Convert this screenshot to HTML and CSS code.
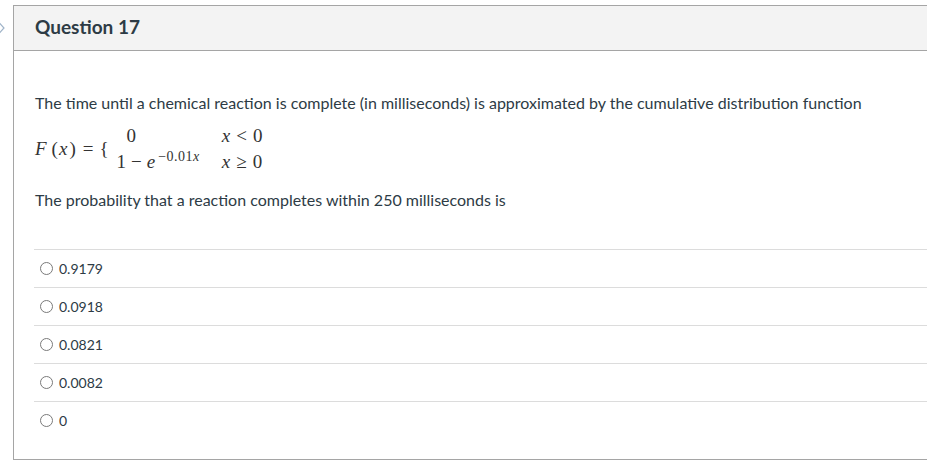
FILE: index.html
```html
<!DOCTYPE html>
<html>
<head>
<meta charset="utf-8">
<link rel="stylesheet" href="styles.css">
</head>
<body>
<div class="page">
  <span class="chevron"><svg width="6" height="12" viewBox="0 0 6 12"><path d="M0.5 1 L5 6 L0.5 11" fill="none" stroke="#9fb3c8" stroke-width="1.2"/></svg></span>
  <div class="question">
    <div class="q-header"><h2 class="q-title">Question 17</h2></div>
    <div class="q-body">
      <p class="q-text">The time until a chemical reaction is complete (in milliseconds) is approximated by the cumulative distribution function</p>
      <div class="math">
        <span class="lhs"><i>F</i><span class="paren po">(</span><i>x</i><span class="paren pc">)</span></span>
        <span class="eq">=</span>
        <span class="brace">{</span>
        <div class="cases">
          <span class="c1 c-zero">0</span>
          <span class="c2"><i>x</i><span class="rel">&lt;</span>0</span>
          <span class="c1">1<span class="bin">−</span><i>e</i><sup>−0.01<i>x</i></sup></span>
          <span class="c2"><i>x</i><span class="rel">≥</span>0</span>
        </div>
      </div>
      <p class="q-text q-prompt">The probability that a reaction completes within 250 milliseconds is</p>
      <div class="answers">
        <label class="answer"><span class="radio"></span><span class="a-text">0.9179</span></label>
        <label class="answer"><span class="radio"></span><span class="a-text">0.0918</span></label>
        <label class="answer"><span class="radio"></span><span class="a-text">0.0821</span></label>
        <label class="answer"><span class="radio"></span><span class="a-text">0.0082</span></label>
        <label class="answer"><span class="radio"></span><span class="a-text">0</span></label>
      </div>
    </div>
  </div>
</div>
</body>
</html>
```
FILE: styles.css
```css
html, body {
  margin: 0;
  padding: 0;
  background: #fff;
  overflow: hidden;
}
.page {
  position: relative;
  padding: 5px 0 0 13px;
  font-family: Lato, "Liberation Sans", sans-serif;
  color: #2d3b45;
}
.chevron {
  position: absolute;
  left: -1px;
  top: 22px;
  line-height: 0;
}
.question {
  width: 940px;
  border: 1px solid #a5a5a5;
  background: #fff;
}
.q-header {
  height: 44px;
  background: #f3f3f3;
  border-bottom: 1px solid #a5a5a5;
  display: flex;
  align-items: center;
  padding-left: 21px;
}
.q-title {
  margin: 0 0 3px 0;
  font-size: 19px;
  font-weight: 700;
  color: #2d3b45;
}
.q-body {
  padding: 42px 0 20px 21px;
}
.q-text {
  margin: 0;
  font-size: 16px;
  line-height: 20px;
}
.q-prompt {
  margin-top: 18px;
}
.math {
  display: flex;
  align-items: center;
  margin-top: 12px;
  font-family: "Liberation Serif", serif;
  font-size: 19px;
  color: #333;
  height: 47px;
}
.math i {
  font-style: italic;
}
.po {
  margin: 0 1px 0 5px;
}
.pc {
  margin: 0 0 0 2px;
}
.eq {
  margin: 0 6px 0 7px;
}
.brace {
  margin-right: 8px;
}
.cases {
  display: grid;
  grid-template-columns: auto auto;
  column-gap: 22px;
  row-gap: 5px;
  line-height: 21px;
}
.c1 {
  text-align: left;
}
.c-zero {
  padding-left: 10px;
}
.c2 {
  text-align: left;
}
.rel {
  margin: 0 6px;
}
.bin {
  margin: 0 5px;
}
.cases sup {
  font-size: 14px;
  vertical-align: 7px;
  line-height: 0;
  margin-left: 3px;
  letter-spacing: 0.5px;
}
.answers {
  margin-top: 39px;
  margin-left: -1px;
}
.answer {
  display: flex;
  align-items: center;
  height: 37px;
  border-top: 1px solid #dcdcdc;
  padding-left: 6px;
}
.radio {
  width: 11px;
  height: 11px;
  border: 1px solid #7a7a7a;
  border-radius: 50%;
  margin-right: 6px;
}
.a-text {
  font-size: 14px;
  color: #2d3b45;
}
```
